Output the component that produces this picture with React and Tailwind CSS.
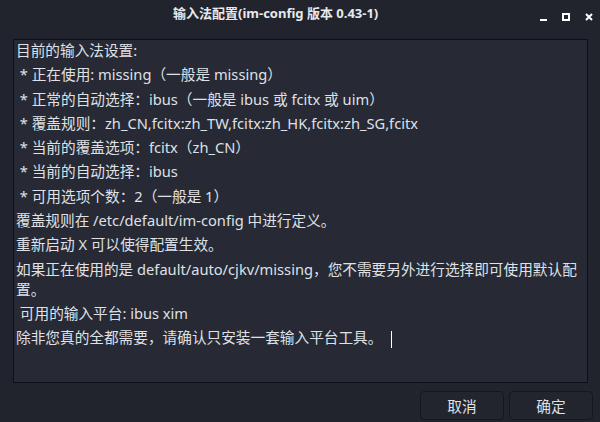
import React from 'react';

const lines = [
  "目前的输入法设置:",
  " * 正在使用: missing（一般是 missing）",
  " * 正常的自动选择：ibus（一般是 ibus 或 fcitx 或 uim）",
  " * 覆盖规则：zh_CN,fcitx:zh_TW,fcitx:zh_HK,fcitx:zh_SG,fcitx",
  " * 当前的覆盖选项：fcitx（zh_CN）",
  " * 当前的自动选择：ibus",
  " * 可用选项个数：2（一般是 1）",
  "覆盖规则在 /etc/default/im-config 中进行定义。",
  "重新启动 X 可以使得配置生效。",
  "如果正在使用的是 default/auto/cjkv/missing，您不需要另外进行选择即可使用默认配置。",
  " 可用的输入平台: ibus xim",
];

const App = () => {
  return (
    <div
      className="w-[600px] h-[422px] bg-[#22242d] text-[#dfe1e6] flex flex-col overflow-hidden"
      style={{ fontFamily: '"Noto Sans", "Noto Sans CJK SC", sans-serif' }}
    >
      {/* Title bar */}
      <div className="h-[39px] flex items-start pt-[4px]">
        <div className="ml-[173px] text-[13px] font-bold leading-[18px] text-[#e8e9ec]">
          输入法配置(im-config 版本 0.43-1)
        </div>
        <div className="ml-auto mr-[7px] flex items-center gap-[15px] h-[18px] mt-[4px]">
          <div className="w-[7px] h-[7px] flex items-end">
            <div className="w-[7px] h-[2px] bg-white"></div>
          </div>
          <div className="w-[8px] h-[8px] border-2 border-white"></div>
          <svg width="8" height="8" viewBox="0 0 8 8">
            <path d="M1 1 L7 7 M7 1 L1 7" stroke="white" strokeWidth="2" />
          </svg>
        </div>
      </div>

      {/* Text area */}
      <div className="mx-[13px] mr-[12px] h-[344px] bg-[#272935] border border-[#0e1015] px-[2px] text-[14.67px]">
        {lines.map((t, i) => (
          <p key={i} className="whitespace-pre-wrap leading-[20px] mb-[4.3px]">{t}</p>
        ))}
        <p className="whitespace-pre-wrap leading-[20px]">
          除非您真的全都需要，请确认只安装一套输入平台工具。
          <span className="inline-block w-px h-[17px] bg-white align-middle ml-[9px]"></span>
        </p>
      </div>

      {/* Buttons */}
      <div className="flex justify-end gap-[5px] mt-[8px] mr-[7px]">
        <button className="w-[84px] h-[29px] rounded-[4px] border border-[#15171c] bg-[#23252e] text-[14.67px] text-[#dfe1e6]">
          取消
        </button>
        <button className="w-[84px] h-[29px] rounded-[4px] border border-[#15171c] bg-[#23252e] text-[14.67px] text-[#dfe1e6]">
          确定
        </button>
      </div>
    </div>
  );
};

export default App;
